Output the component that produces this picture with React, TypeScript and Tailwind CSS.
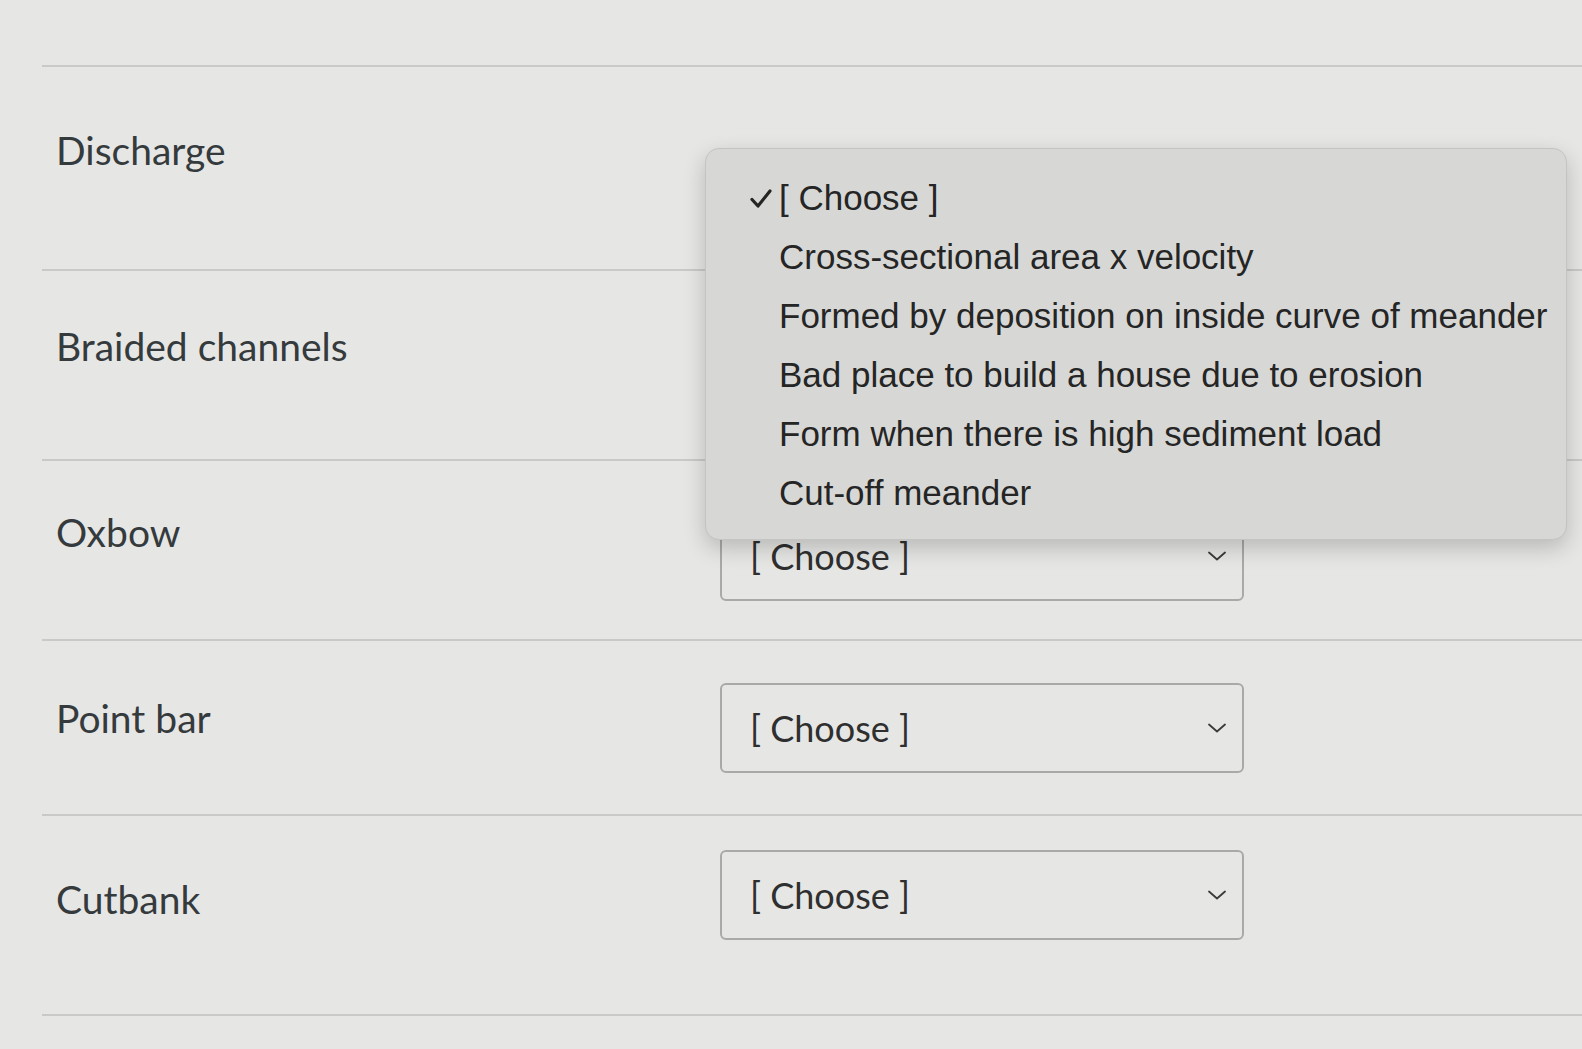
import React from 'react';

type Row = {
    label: string;
    rowClass: string;
    labelClass: string;
    selectClass: string;
    covered?: boolean;
};

// row heights / offsets follow the screenshot (rows drift a bit)
const rows: Row[] = [
    { label: 'Discharge', rowClass: 'h-[204px]', labelClass: 'pt-[56px]', selectClass: 'mt-[88px]', covered: true },
    { label: 'Braided channels', rowClass: 'h-[190px]', labelClass: 'pt-[48px]', selectClass: 'mt-[60px]', covered: true },
    { label: 'Oxbow', rowClass: 'h-[180px]', labelClass: 'pt-[44px]', selectClass: 'mt-[50px]' },
    { label: 'Point bar', rowClass: 'h-[175px]', labelClass: 'pt-[50px]', selectClass: 'mt-[42px]' },
    { label: 'Cutbank', rowClass: 'h-[200px]', labelClass: 'pt-[56px]', selectClass: 'mt-[34px]' },
];

const options = [
    '[ Choose ]',
    'Cross-sectional area x velocity',
    'Formed by deposition on inside curve of meander',
    'Bad place to build a house due to erosion',
    'Form when there is high sediment load',
    'Cut-off meander',
];

const Chevron: React.FC = () => (
    <svg width="22" height="14" viewBox="0 0 22 14" fill="none" className="text-[#3a3a3a]">
        <path d="M3 3.5 L11 10.5 L19 3.5" stroke="currentColor" strokeWidth="1.8" strokeLinecap="round" strokeLinejoin="round" />
    </svg>
);

// covered selects sit under the open menu, so only their box shows
const SelectBox: React.FC<{ className: string; covered?: boolean }> = ({ className, covered }) => (
    <div className={`${className} flex h-[90px] w-[524px] shrink-0 items-center justify-between rounded-md border-2 border-[#a9aaa8] bg-[#e6e7e5] pl-[28px] pr-[14px]`}>
        {!covered && <span className="text-[36px] text-[#2f2f2f]">[ Choose ]</span>}
        {!covered && <Chevron />}
    </div>
);

export default function App() {
    return (
        <div
            className="relative h-[1049px] w-[1582px] overflow-hidden bg-[#e6e7e5]"
            style={{ fontFamily: 'Lato, "Liberation Sans", sans-serif' }}
        >
            <div className="pl-[42px] pt-[65px]">
                {rows.map((row) => (
                    <div key={row.label} className={`${row.rowClass} flex border-t-2 border-[#c9cac8]`}>
                        <div className={`${row.labelClass} w-[678px] shrink-0 pl-[14px] text-[39px] leading-[54px] text-[#353a3d]`}>
                            {row.label}
                        </div>
                        <SelectBox className={row.selectClass} covered={row.covered} />
                    </div>
                ))}
                <div className="border-t-2 border-[#c9cac8]" />
            </div>

            {/* open dropdown menu */}
            <div
                className="absolute left-[705px] top-[148px] w-[862px] rounded-[14px] border border-[#c4c4c3] bg-[#d7d8d6] pb-[16px] pt-[20px] shadow-[0_8px_22px_rgba(0,0,0,0.2)]"
                style={{ fontFamily: '"Liberation Sans", Arial, sans-serif' }}
            >
                {options.map((opt, i) => (
                    <div key={opt} className="flex h-[59px] items-center text-[35px] text-[#252525]">
                        <span className="flex w-[73px] shrink-0 justify-end pr-[6px]">
                            {i === 0 && (
                                <svg width="24" height="22" viewBox="0 0 24 22" fill="none">
                                    <path d="M3 11.5 L9 18 L21 3" stroke="#252525" strokeWidth="3.2" strokeLinecap="round" strokeLinejoin="round" />
                                </svg>
                            )}
                        </span>
                        <span>{opt}</span>
                    </div>
                ))}
            </div>
        </div>
    );
}
